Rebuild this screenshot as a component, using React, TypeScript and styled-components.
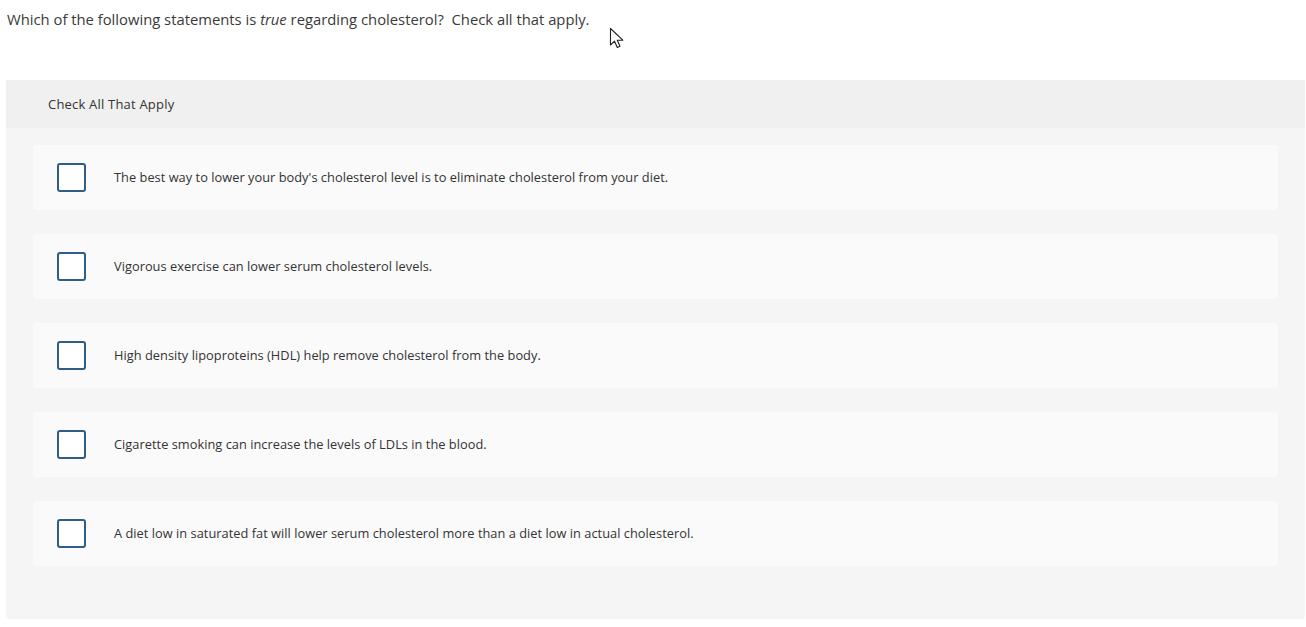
import React from "react";
import styled, { createGlobalStyle } from "styled-components";

const Global = createGlobalStyle`
  html, body { margin: 0; padding: 0; background: #ffffff; }
  body { font-family: "Open Sans", "Liberation Sans", sans-serif; color: #333; }
`;

const Page = styled.div`
  width: 1306px;
  height: 627px;
  box-sizing: border-box;
  padding: 8px 1px 0 6px;
  display: flex;
  flex-direction: column;
`;

const QuestionRow = styled.div`
  display: flex;
  align-items: flex-start;
  height: 72px;
  padding-left: 1px;
`;

const Question = styled.p`
  margin: 0;
  font-size: 14.8px;
  line-height: 22px;
  color: #3a3a3a;
  letter-spacing: 0px;
  em { font-style: italic; }
`;

const Cursor = styled.svg`
  margin-left: 19px;
  margin-top: 19px;
  width: 18px;
  height: 24px;
`;

const Panel = styled.section`
  background: #f5f5f5;
  border-radius: 0 0 3px 3px;
  height: 539px;
  display: flex;
  flex-direction: column;
`;

const PanelHeader = styled.div`
  background: #f0f0f0;
  height: 48px;
  display: flex;
  align-items: center;
  padding-left: 42px;
  font-size: 13px;
  letter-spacing: 0.2px;
  color: #333;
`;

const Options = styled.div`
  display: flex;
  flex-direction: column;
  gap: 24px;
  padding: 17px 27px 0 27px;
`;

const Option = styled.label`
  display: flex;
  align-items: center;
  height: 65px;
  background: #fafafa;
  border-radius: 4px;
  padding-left: 24px;
  cursor: pointer;
`;

const Box = styled.span`
  width: 29px;
  height: 29px;
  box-sizing: border-box;
  border: 2px solid #2f5d86;
  border-radius: 3px;
  background: #fff;
  flex-shrink: 0;
`;

const OptionText = styled.span`
  margin-left: 28px;
  margin-top: -1px;
  font-size: 12.8px;
  color: #333;
  letter-spacing: 0.03px;
`;

const options = [
  "The best way to lower your body's cholesterol level is to eliminate cholesterol from your diet.",
  "Vigorous exercise can lower serum cholesterol levels.",
  "High density lipoproteins (HDL) help remove cholesterol from the body.",
  "Cigarette smoking can increase the levels of LDLs in the blood.",
  "A diet low in saturated fat will lower serum cholesterol more than a diet low in actual cholesterol.",
];

export default function App() {
  return (
    <>
      <Global />
      <Page>
        <QuestionRow>
          <Question>
            Which of the following statements is <em>true</em> regarding cholesterol?&nbsp; Check all that apply.
          </Question>
          <Cursor viewBox="0 0 18 24">
            <path
              d="M1.5 1.5 L1.5 18 L5.5 14.2 L8.3 20.5 L11 19.3 L8.3 13.2 L13.8 13.2 Z"
              fill="#fff"
              stroke="#222"
              strokeWidth="1.1"
              strokeLinejoin="round"
            />
          </Cursor>
        </QuestionRow>
        <Panel>
          <PanelHeader>Check All That Apply</PanelHeader>
          <Options>
            {options.map((o) => (
              <Option key={o}>
                <Box />
                <OptionText>{o}</OptionText>
              </Option>
            ))}
          </Options>
        </Panel>
      </Page>
    </>
  );
}
